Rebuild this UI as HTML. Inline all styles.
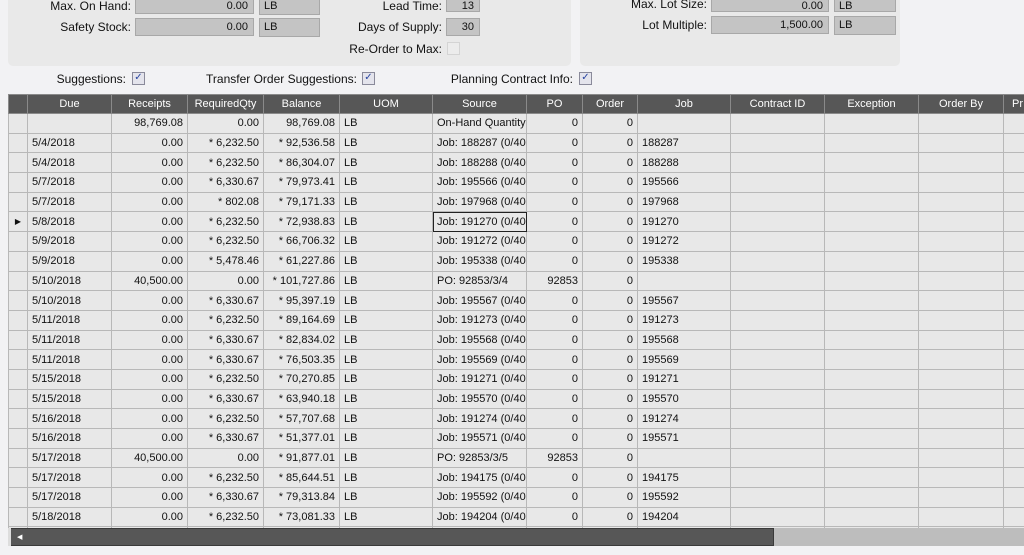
<!DOCTYPE html>
<html><head><meta charset="utf-8"><style>
body{margin:0;width:1024px;height:555px;background:#f2f2f4;font-family:"Liberation Sans",Arial,sans-serif;font-size:11px;color:#111;position:relative;overflow:hidden}
.a{position:absolute}
.panel{background:#e9e9e9;border-radius:5px}
.lbl{position:absolute;text-align:right;font-size:12px;white-space:nowrap}
.fld{position:absolute;background:#c4c4c4;border:1px solid #a8a8a8;box-sizing:border-box;font-size:11px;text-align:right;padding-right:5px;line-height:16px}
.uom{position:absolute;background:#c4c4c4;border:1px solid #a8a8a8;box-sizing:border-box;font-size:11px;padding-left:4px;line-height:16px}
.cb{position:absolute;width:11px;height:11px;background:#e4e4ec;border:1px solid #8a8a9a;font-size:10px;line-height:10px;text-align:center;color:#2844a0}
table{position:absolute;left:8px;top:94px;border-collapse:collapse;table-layout:fixed;width:1030px}
th{background:#575757;color:#fff;font-weight:normal;font-size:11px;height:18px;border:1px solid #8a8a8a;padding:0;white-space:nowrap;overflow:hidden}
td{background:#e8e8e8;border:1px solid #b8b8b8;height:18.7px;padding:0 4px;white-space:nowrap;overflow:hidden;font-size:11px}
td.r{text-align:right}
td.h{padding:0;text-align:center;font-size:8px}
td.sel{outline:1px solid #222;outline-offset:-1px}
</style></head><body>
<div class="a panel" style="left:8px;top:-6px;width:563px;height:72px"></div>
<div class="a panel" style="left:580px;top:-6px;width:320px;height:72px"></div>

<div class="lbl" style="right:893px;top:-1px">Max. On Hand:</div>
<div class="fld" style="left:135px;top:-3px;width:119px;height:17px">0.00</div>
<div class="uom" style="left:259px;top:-3px;width:61px;height:18px">LB</div>
<div class="lbl" style="right:893px;top:20px">Safety Stock:</div>
<div class="fld" style="left:135px;top:18px;width:119px;height:18px">0.00</div>
<div class="uom" style="left:259px;top:18px;width:61px;height:19px">LB</div>

<div class="lbl" style="right:582px;top:-1px">Lead Time:</div>
<div class="fld" style="left:446px;top:-3px;width:34px;height:15px">13</div>
<div class="lbl" style="right:582px;top:20px">Days of Supply:</div>
<div class="fld" style="left:446px;top:18px;width:34px;height:18px">30</div>
<div class="lbl" style="right:582px;top:42px">Re-Order to Max:</div>
<div class="cb" style="left:447px;top:42px;background:#ececec;border-color:#d4d4d4"></div>

<div class="lbl" style="right:317px;top:-3px">Max. Lot Size:</div>
<div class="fld" style="left:711px;top:-3px;width:118px;height:15px">0.00</div>
<div class="uom" style="left:834px;top:-3px;width:62px;height:15px">LB</div>
<div class="lbl" style="right:317px;top:18px">Lot Multiple:</div>
<div class="fld" style="left:711px;top:16px;width:118px;height:18px">1,500.00</div>
<div class="uom" style="left:834px;top:16px;width:62px;height:19px">LB</div>

<div class="lbl" style="right:898px;top:72px">Suggestions:</div>
<div class="cb" style="left:132px;top:72px">✓</div>
<div class="lbl" style="right:667px;top:72px">Transfer Order Suggestions:</div>
<div class="cb" style="left:362px;top:72px">✓</div>
<div class="lbl" style="right:451px;top:72px">Planning Contract Info:</div>
<div class="cb" style="left:579px;top:72px">✓</div>

<table>
<colgroup><col style="width:19px"><col style="width:84px"><col style="width:76px"><col style="width:76px"><col style="width:76px"><col style="width:93px"><col style="width:94px"><col style="width:56px"><col style="width:55px"><col style="width:93px"><col style="width:94px"><col style="width:94px"><col style="width:85px"><col style="width:35px"></colgroup>
<tr><th></th><th>Due</th><th>Receipts</th><th>RequiredQty</th><th>Balance</th><th>UOM</th><th>Source</th><th>PO</th><th>Order</th><th>Job</th><th>Contract ID</th><th>Exception</th><th>Order By</th><th style="text-align:left;padding-left:8px">Pr</th></tr>
<tr><td class="h"></td><td></td><td class="r">98,769.08</td><td class="r">0.00</td><td class="r">98,769.08</td><td>LB</td><td>On-Hand Quantity</td><td class="r">0</td><td class="r">0</td><td></td><td></td><td></td><td></td><td></td></tr>
<tr><td class="h"></td><td>5/4/2018</td><td class="r">0.00</td><td class="r">* 6,232.50</td><td class="r">* 92,536.58</td><td>LB</td><td>Job: 188287 (0/40</td><td class="r">0</td><td class="r">0</td><td>188287</td><td></td><td></td><td></td><td></td></tr>
<tr><td class="h"></td><td>5/4/2018</td><td class="r">0.00</td><td class="r">* 6,232.50</td><td class="r">* 86,304.07</td><td>LB</td><td>Job: 188288 (0/40</td><td class="r">0</td><td class="r">0</td><td>188288</td><td></td><td></td><td></td><td></td></tr>
<tr><td class="h"></td><td>5/7/2018</td><td class="r">0.00</td><td class="r">* 6,330.67</td><td class="r">* 79,973.41</td><td>LB</td><td>Job: 195566 (0/40</td><td class="r">0</td><td class="r">0</td><td>195566</td><td></td><td></td><td></td><td></td></tr>
<tr><td class="h"></td><td>5/7/2018</td><td class="r">0.00</td><td class="r">* 802.08</td><td class="r">* 79,171.33</td><td>LB</td><td>Job: 197968 (0/40</td><td class="r">0</td><td class="r">0</td><td>197968</td><td></td><td></td><td></td><td></td></tr>
<tr><td class="h">▶</td><td>5/8/2018</td><td class="r">0.00</td><td class="r">* 6,232.50</td><td class="r">* 72,938.83</td><td>LB</td><td class="sel">Job: 191270 (0/40</td><td class="r">0</td><td class="r">0</td><td>191270</td><td></td><td></td><td></td><td></td></tr>
<tr><td class="h"></td><td>5/9/2018</td><td class="r">0.00</td><td class="r">* 6,232.50</td><td class="r">* 66,706.32</td><td>LB</td><td>Job: 191272 (0/40</td><td class="r">0</td><td class="r">0</td><td>191272</td><td></td><td></td><td></td><td></td></tr>
<tr><td class="h"></td><td>5/9/2018</td><td class="r">0.00</td><td class="r">* 5,478.46</td><td class="r">* 61,227.86</td><td>LB</td><td>Job: 195338 (0/40</td><td class="r">0</td><td class="r">0</td><td>195338</td><td></td><td></td><td></td><td></td></tr>
<tr><td class="h"></td><td>5/10/2018</td><td class="r">40,500.00</td><td class="r">0.00</td><td class="r">* 101,727.86</td><td>LB</td><td>PO: 92853/3/4</td><td class="r">92853</td><td class="r">0</td><td></td><td></td><td></td><td></td><td></td></tr>
<tr><td class="h"></td><td>5/10/2018</td><td class="r">0.00</td><td class="r">* 6,330.67</td><td class="r">* 95,397.19</td><td>LB</td><td>Job: 195567 (0/40</td><td class="r">0</td><td class="r">0</td><td>195567</td><td></td><td></td><td></td><td></td></tr>
<tr><td class="h"></td><td>5/11/2018</td><td class="r">0.00</td><td class="r">* 6,232.50</td><td class="r">* 89,164.69</td><td>LB</td><td>Job: 191273 (0/40</td><td class="r">0</td><td class="r">0</td><td>191273</td><td></td><td></td><td></td><td></td></tr>
<tr><td class="h"></td><td>5/11/2018</td><td class="r">0.00</td><td class="r">* 6,330.67</td><td class="r">* 82,834.02</td><td>LB</td><td>Job: 195568 (0/40</td><td class="r">0</td><td class="r">0</td><td>195568</td><td></td><td></td><td></td><td></td></tr>
<tr><td class="h"></td><td>5/11/2018</td><td class="r">0.00</td><td class="r">* 6,330.67</td><td class="r">* 76,503.35</td><td>LB</td><td>Job: 195569 (0/40</td><td class="r">0</td><td class="r">0</td><td>195569</td><td></td><td></td><td></td><td></td></tr>
<tr><td class="h"></td><td>5/15/2018</td><td class="r">0.00</td><td class="r">* 6,232.50</td><td class="r">* 70,270.85</td><td>LB</td><td>Job: 191271 (0/40</td><td class="r">0</td><td class="r">0</td><td>191271</td><td></td><td></td><td></td><td></td></tr>
<tr><td class="h"></td><td>5/15/2018</td><td class="r">0.00</td><td class="r">* 6,330.67</td><td class="r">* 63,940.18</td><td>LB</td><td>Job: 195570 (0/40</td><td class="r">0</td><td class="r">0</td><td>195570</td><td></td><td></td><td></td><td></td></tr>
<tr><td class="h"></td><td>5/16/2018</td><td class="r">0.00</td><td class="r">* 6,232.50</td><td class="r">* 57,707.68</td><td>LB</td><td>Job: 191274 (0/40</td><td class="r">0</td><td class="r">0</td><td>191274</td><td></td><td></td><td></td><td></td></tr>
<tr><td class="h"></td><td>5/16/2018</td><td class="r">0.00</td><td class="r">* 6,330.67</td><td class="r">* 51,377.01</td><td>LB</td><td>Job: 195571 (0/40</td><td class="r">0</td><td class="r">0</td><td>195571</td><td></td><td></td><td></td><td></td></tr>
<tr><td class="h"></td><td>5/17/2018</td><td class="r">40,500.00</td><td class="r">0.00</td><td class="r">* 91,877.01</td><td>LB</td><td>PO: 92853/3/5</td><td class="r">92853</td><td class="r">0</td><td></td><td></td><td></td><td></td><td></td></tr>
<tr><td class="h"></td><td>5/17/2018</td><td class="r">0.00</td><td class="r">* 6,232.50</td><td class="r">* 85,644.51</td><td>LB</td><td>Job: 194175 (0/40</td><td class="r">0</td><td class="r">0</td><td>194175</td><td></td><td></td><td></td><td></td></tr>
<tr><td class="h"></td><td>5/17/2018</td><td class="r">0.00</td><td class="r">* 6,330.67</td><td class="r">* 79,313.84</td><td>LB</td><td>Job: 195592 (0/40</td><td class="r">0</td><td class="r">0</td><td>195592</td><td></td><td></td><td></td><td></td></tr>
<tr><td class="h"></td><td>5/18/2018</td><td class="r">0.00</td><td class="r">* 6,232.50</td><td class="r">* 73,081.33</td><td>LB</td><td>Job: 194204 (0/40</td><td class="r">0</td><td class="r">0</td><td>194204</td><td></td><td></td><td></td><td></td></tr>
<tr><td class="h"></td><td></td><td></td><td></td><td></td><td></td><td></td><td></td><td></td><td></td><td></td><td></td><td></td><td></td></tr>
</table>
<div class="a" style="left:0;top:546px;width:1024px;height:9px;background:#f2f2f4"></div>
<div class="a" style="left:8px;top:528px;width:1016px;height:18px;background:#bdbdbd"></div>
<div class="a" style="left:8px;top:528px;width:766px;height:18px;background:#575757;border:1px solid #3a3a3a;box-sizing:border-box"></div>
<div class="a" style="left:8px;top:528px;width:3px;height:18px;background:#ddd"></div>
<div class="a" style="left:17px;top:533px;color:#fff;font-size:7px">◀</div>
</body></html>
